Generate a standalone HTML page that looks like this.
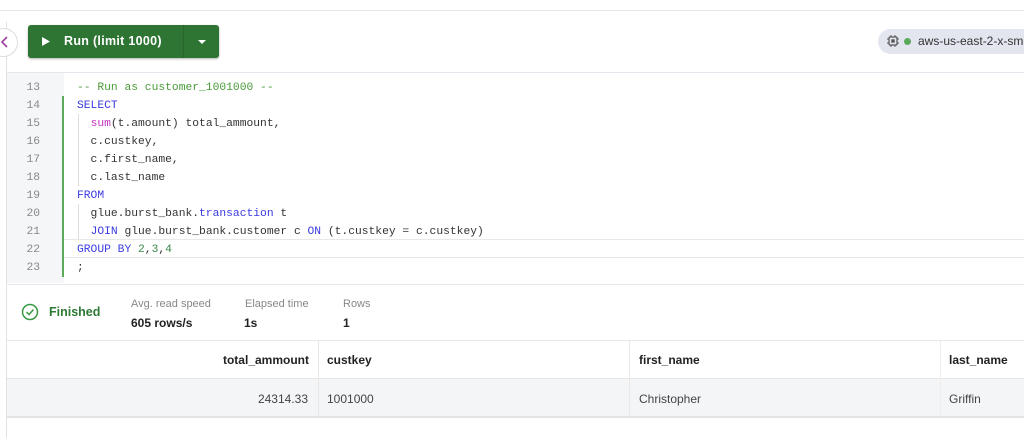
<!DOCTYPE html>
<html><head><meta charset="utf-8"><style>
body{margin:0;width:1024px;height:438px;background:#fff;position:relative;overflow:hidden;font-family:"Liberation Sans",sans-serif;}
.a{position:absolute}
.code{font-family:"Liberation Mono",monospace;font-size:11.3px;color:#333;white-space:pre;line-height:18px}
.ln{font-family:"Liberation Mono",monospace;font-size:11.3px;color:#888;line-height:18px;text-align:right;width:32px;left:8px}
.k{color:#3a3ae0}.f{color:#c032c0}.c{color:#4a9a3a}.n{color:#3a8a4a}
.lbl{font-size:11px;color:#888}.val{font-size:12px;font-weight:bold;color:#222}
.th{font-size:12px;font-weight:bold;color:#222}.td{font-size:12px;color:#444}
</style></head><body>
<div class="a" style="left:0;top:10px;width:1024px;height:1px;background:#e6e6ee"></div>
<div class="a" style="left:6px;top:22px;width:1px;height:416px;background:#e2e2e2"></div>
<div class="a" style="left:-11px;top:28px;width:27px;height:27px;border:1px solid #ddd;border-radius:50%;background:#fff"></div>
<svg class="a" style="left:0;top:35px" width="10" height="14"><path d="M7 2 L2 7 L7 12" stroke="#a040a0" stroke-width="1.6" fill="none"/></svg>
<div class="a" style="left:28px;top:25px;width:191px;height:33px;background:#2e7433;border-radius:3px;box-shadow:0 1px 2px rgba(0,0,0,.3)"></div>
<div class="a" style="left:183px;top:25px;width:1px;height:33px;background:#27652b"></div>
<svg class="a" style="left:41px;top:36px" width="10" height="11"><path d="M1 1 L9 5.5 L1 10Z" fill="#fff"/></svg>
<div class="a" style="left:64px;top:34px;color:#fff;font-size:12.5px;font-weight:bold;letter-spacing:.3px">Run (limit 1000)</div>
<svg class="a" style="left:197px;top:39px" width="10" height="6"><path d="M1 1 L9 1 L5 5Z" fill="#fff"/></svg>
<div class="a" style="left:878px;top:29px;width:160px;height:25px;background:#e4e6ef;border-radius:13px"></div>
<svg class="a" style="left:887px;top:35px" width="12" height="12"><rect x="2" y="2" width="8" height="8" rx="1" fill="none" stroke="#555" stroke-width="1.2"/><rect x="4.3" y="4.3" width="3.4" height="3.4" fill="#555"/><path d="M4 0v2M8 0v2M4 10v2M8 10v2M0 4h2M0 8h2M10 4h2M10 8h2" stroke="#555"/></svg>
<div class="a" style="left:904px;top:38px;width:7px;height:7px;border-radius:50%;background:#5aaa5a"></div>
<div class="a" style="left:918px;top:34px;font-size:12px;color:#333">aws-us-east-2-x-sm</div>
<div class="a" style="left:7px;top:72px;width:1017px;height:1px;background:#e6e6ee"></div>
<div class="a" style="left:7px;top:73px;width:57px;height:210px;background:#f5f6f8"></div>
<div class="a" style="left:62px;top:96px;width:2px;height:181px;background:#5aaa5a"></div>
<div class="a" style="left:78px;top:114px;width:1px;height:72px;background:#ddd"></div>
<div class="a" style="left:78px;top:204px;width:1px;height:36px;background:#ddd"></div>
<div class="a" style="left:64px;top:239px;width:960px;height:17px;border-top:1px solid #e8e8e8;border-bottom:1px solid #e8e8e8"></div>
<div class="a ln" style="top:79px">13<br>14<br>15<br>16<br>17<br>18<br>19<br>20<br>21<br>22<br>23</div>
<div class="a code" style="left:77px;top:79px"><span class="c">-- Run as customer_1001000 --</span>
<span class="k">SELECT</span>
  <span class="f">sum</span>(t.amount) total_ammount,
  c.custkey,
  c.first_name,
  c.last_name
<span class="k">FROM</span>
  glue.burst_bank.<span class="k">transaction</span> t
  <span class="k">JOIN</span> glue.burst_bank.customer c <span class="k">ON</span> (t.custkey = c.custkey)
<span class="k">GROUP BY</span> <span class="n">2</span>,<span class="n">3</span>,<span class="n">4</span>
;</div>
<div class="a" style="left:7px;top:284px;width:1017px;height:1px;background:#e6e6ee"></div>
<svg class="a" style="left:21px;top:303px" width="18" height="18"><circle cx="9" cy="9" r="7.5" fill="none" stroke="#3a9a44" stroke-width="1.5"/><path d="M5.5 9 L8 11.5 L12.5 6.5" fill="none" stroke="#3a9a44" stroke-width="1.5"/></svg>
<div class="a" style="left:49px;top:305px;font-size:12.5px;font-weight:bold;color:#2e7a36">Finished</div>
<div class="a lbl" style="left:131px;top:298px">Avg. read speed</div><div class="a val" style="left:131px;top:316px">605 rows/s</div>
<div class="a lbl" style="left:245px;top:298px">Elapsed time</div><div class="a val" style="left:244px;top:316px">1s</div>
<div class="a lbl" style="left:343px;top:298px">Rows</div><div class="a val" style="left:343px;top:316px">1</div>
<div class="a" style="left:7px;top:340px;width:1017px;height:1px;background:#e6e6ee"></div>
<div class="a" style="left:7px;top:378px;width:1017px;height:37px;background:#f4f5f7;border-top:1px solid #e6e6e6;border-bottom:2px solid #e4e4e4"></div>
<div class="a" style="left:318px;top:341px;width:1px;height:75px;background:#e8e8e8"></div>
<div class="a" style="left:629px;top:341px;width:1px;height:75px;background:#e8e8e8"></div>
<div class="a" style="left:940px;top:341px;width:1px;height:75px;background:#eeeeee"></div>
<div class="a th" style="left:100px;width:209px;text-align:right;top:353px">total_ammount</div>
<div class="a th" style="left:327px;top:353px">custkey</div>
<div class="a th" style="left:639px;top:353px">first_name</div>
<div class="a th" style="left:949px;top:353px">last_name</div>
<div class="a td" style="left:100px;width:208px;text-align:right;top:392px">24314.33</div>
<div class="a td" style="left:327px;top:392px">1001000</div>
<div class="a td" style="left:639px;top:392px">Christopher</div>
<div class="a td" style="left:949px;top:392px">Griffin</div>
</body></html>
